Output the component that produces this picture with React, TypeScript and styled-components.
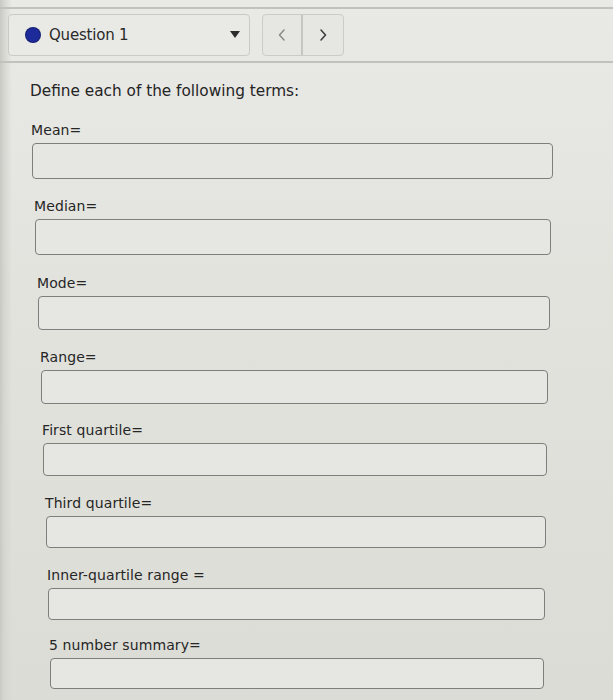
import React from "react";
import styled, { createGlobalStyle } from "styled-components";

const GlobalStyle = createGlobalStyle`
  html, body {
    margin: 0;
    padding: 0;
    background: #e3e3de;
  }
  * {
    box-sizing: border-box;
  }
`;

const Page = styled.div`
  width: 613px;
  min-height: 700px;
  overflow: hidden;
  font-family: "DejaVu Sans", Verdana, sans-serif;
  color: #262626;
  background: linear-gradient(
      90deg,
      #c9c9c4 0px,
      #d6d6d1 4px,
      rgba(227, 227, 222, 0) 12px
    ),
    linear-gradient(180deg, #e9e9e6 0%, #e3e3de 40%, #dcdcd6 100%);
`;

const Rule = styled.div<{ $top: number }>`
  height: 2px;
  margin-top: ${(p) => p.$top}px;
  background: #c2c2bd;
`;

const Toolbar = styled.div`
  display: flex;
  align-items: center;
  gap: 12px;
  padding: 3px 0 0 8px;
  height: 48px;
`;

const QuestionSelect = styled.div`
  display: flex;
  align-items: center;
  width: 242px;
  height: 42px;
  padding: 0 9px 0 17px;
  border: 1.5px solid #c9c9c5;
  border-radius: 4px;
  background: #e9e9e6;
`;

const Dot = styled.span`
  width: 14px;
  height: 14px;
  border-radius: 50%;
  background: #1d2a9a;
  box-shadow: 0 0 0 1px #15206f;
  margin-right: 9px;
`;

const QuestionText = styled.span`
  flex: 1;
  font-size: 15px;
  letter-spacing: -0.2px;
  color: #2a2a2a;
`;

const Caret = styled.span`
  width: 0;
  height: 0;
  border-left: 5px solid transparent;
  border-right: 5px solid transparent;
  border-top: 7px solid #2d2d2d;
`;

const NavGroup = styled.div`
  display: flex;
  height: 42px;
  border: 1.5px solid #cbcbc7;
  border-radius: 4px;
  background: #e6e6e3;
  overflow: hidden;
`;

const NavButton = styled.div<{ $divider?: boolean; $dim?: boolean }>`
  width: 40px;
  display: flex;
  align-items: center;
  justify-content: center;
  border-right: ${(p) => (p.$divider ? "2px solid #c6c6c1" : "none")};
  color: ${(p) => (p.$dim ? "#8a8a88" : "#3a3a3a")};
`;

const Content = styled.div`
  padding: 19px 0 0 30px;
`;

const Title = styled.div`
  font-size: 15.3px;
  line-height: 18px;
  color: #242424;
  margin-bottom: 21px;
`;

const Field = styled.div<{ $shift: number; $gapBelow: number }>`
  display: flex;
  flex-direction: column;
  gap: 4px;
  margin-left: ${(p) => p.$shift}px;
  margin-bottom: ${(p) => p.$gapBelow}px;
`;

const Label = styled.div`
  margin-left: -1px;
  font-size: 14px;
  line-height: 18px;
  letter-spacing: 0.1px;
  color: #262626;
`;

const AnswerBox = styled.div<{ $width: number; $height: number }>`
  width: ${(p) => p.$width}px;
  height: ${(p) => p.$height}px;
  border: 1.5px solid #7e7e7c;
  border-radius: 4px;
  background: #e6e6e2;
`;

const Chevron = ({ dir }: { dir: "left" | "right" }) => (
  <svg width="10" height="14" viewBox="0 0 10 14" fill="none">
    <path
      d={dir === "left" ? "M7 2 L2.5 7 L7 12" : "M3 2 L7.5 7 L3 12"}
      stroke="currentColor"
      strokeWidth="1.5"
      strokeLinecap="round"
      strokeLinejoin="round"
    />
  </svg>
);

const fields = [
  { label: "Mean=", shift: 2, width: 521, height: 36, gapBelow: 18 },
  { label: "Median=", shift: 5, width: 516, height: 36, gapBelow: 19 },
  { label: "Mode=", shift: 8, width: 512, height: 34, gapBelow: 18 },
  { label: "Range=", shift: 11, width: 507, height: 34, gapBelow: 17 },
  { label: "First quartile=", shift: 13, width: 504, height: 33, gapBelow: 18 },
  { label: "Third quartile=", shift: 16, width: 500, height: 32, gapBelow: 18 },
  { label: "Inner-quartile range =", shift: 18, width: 497, height: 32, gapBelow: 16 },
  { label: "5 number summary=", shift: 20, width: 494, height: 31, gapBelow: 10 },
];

const App: React.FC = () => {
  return (
    <>
      <GlobalStyle />
      <Page>
        <Rule $top={7} />
        <Toolbar>
          <QuestionSelect>
            <Dot />
            <QuestionText>Question 1</QuestionText>
            <Caret />
          </QuestionSelect>
          <NavGroup>
            <NavButton $divider $dim>
              <Chevron dir="left" />
            </NavButton>
            <NavButton>
              <Chevron dir="right" />
            </NavButton>
          </NavGroup>
        </Toolbar>
        <Rule $top={4} />
        <Content>
          <Title>Define each of the following terms:</Title>
          {fields.map((f) => (
            <Field key={f.label} $shift={f.shift} $gapBelow={f.gapBelow}>
              <Label>{f.label}</Label>
              <AnswerBox $width={f.width} $height={f.height} />
            </Field>
          ))}
        </Content>
      </Page>
    </>
  );
};

export default App;
